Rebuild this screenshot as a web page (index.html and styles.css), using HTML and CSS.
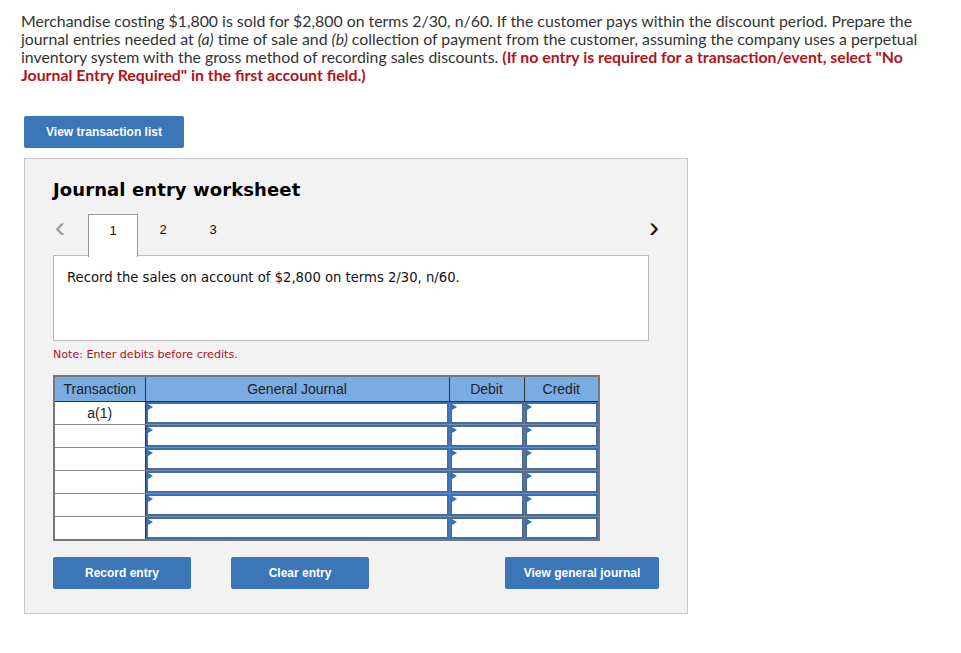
FILE: index.html
```html
<!DOCTYPE html>
<html lang="en">
<head>
    <meta charset="UTF-8">
    <title>Journal Entry Worksheet</title>
    <link rel="stylesheet" href="styles.css">
</head>
<body>
    <p class="question">
        Merchandise costing $1,800 is sold for $2,800 on terms 2/30, n/60. If the customer pays within the discount period. Prepare the<br>
        journal entries needed at <i>(a)</i> time of sale and <i>(b)</i> collection of payment from the customer, assuming the company uses a perpetual<br>
        inventory system with the gross method of recording sales discounts. <strong class="hint">(If no entry is required for a transaction/event, select "No<br>
        Journal Entry Required" in the first account field.)</strong>
    </p>

    <button class="btn btn-list">View transaction list</button>

    <div class="worksheet">
        <h1>Journal entry worksheet</h1>

        <div class="tabs">
            <span class="arrow arrow-left">&#8249;</span>
            <span class="tab active">1</span>
            <span class="tab">2</span>
            <span class="tab">3</span>
            <span class="arrow arrow-right">&#8250;</span>
        </div>

        <div class="description">Record the sales on account of $2,800 on terms 2/30, n/60.</div>

        <p class="note">Note: Enter debits before credits.</p>

        <table class="journal">
            <thead>
                <tr>
                    <th class="col-trans">Transaction</th>
                    <th class="col-account">General Journal</th>
                    <th class="col-amount">Debit</th>
                    <th class="col-amount">Credit</th>
                </tr>
            </thead>
            <tbody>
                <tr>
                    <td class="trans">a(1)</td>
                    <td><div class="field"></div></td>
                    <td><div class="field"></div></td>
                    <td><div class="field"></div></td>
                </tr>
                <tr>
                    <td class="trans"></td>
                    <td><div class="field"></div></td>
                    <td><div class="field"></div></td>
                    <td><div class="field"></div></td>
                </tr>
                <tr>
                    <td class="trans"></td>
                    <td><div class="field"></div></td>
                    <td><div class="field"></div></td>
                    <td><div class="field"></div></td>
                </tr>
                <tr>
                    <td class="trans"></td>
                    <td><div class="field"></div></td>
                    <td><div class="field"></div></td>
                    <td><div class="field"></div></td>
                </tr>
                <tr>
                    <td class="trans"></td>
                    <td><div class="field"></div></td>
                    <td><div class="field"></div></td>
                    <td><div class="field"></div></td>
                </tr>
                <tr>
                    <td class="trans"></td>
                    <td><div class="field"></div></td>
                    <td><div class="field"></div></td>
                    <td><div class="field"></div></td>
                </tr>
            </tbody>
        </table>

        <div class="actions">
            <button class="btn btn-record">Record entry</button>
            <button class="btn btn-clear">Clear entry</button>
            <button class="btn btn-view">View general journal</button>
        </div>
    </div>
</body>
</html>
```

FILE: styles.css
```css
* {
    box-sizing: border-box;
}

body {
    margin: 0;
    padding: 12px 0 0 0;
    background: #fff;
    color: #333;
    font-family: 'Lato', 'Open Sans', sans-serif;
}

.question {
    margin: 0 0 0 21px;
    width: 935px;
    white-space: nowrap;
    font-size: 15.85px;
    line-height: 18px;
    color: #333;
}

.question i {
    font-style: italic;
}

.hint {
    color: #b3121b;
    font-weight: 700;
}

.btn {
    display: block;
    height: 32px;
    border: none;
    border-radius: 2px;
    background-color: #3a76b8;
    color: #fff;
    font-family: 'Liberation Sans', Arial, sans-serif;
    font-weight: bold;
    font-size: 12px;
    cursor: pointer;
}

.btn-list {
    width: 160px;
    margin: 32px 0 0 24px;
}

.worksheet {
    width: 664px;
    height: 456px;
    margin: 10px 0 0 24px;
    padding: 0 0 0 28px;
    background: #f2f2f2;
    border: 1px solid #c8c8c8;
}

h1 {
    margin: 20px 0 0 0;
    font-family: 'DejaVu Sans', Verdana, sans-serif;
    font-size: 18px;
    font-weight: bold;
    color: #000;
    letter-spacing: 0.1px;
}

.tabs {
    display: flex;
    align-items: stretch;
    height: 42px;
    margin-top: 14px;
    width: 606px;
    font-family: 'Liberation Sans', Arial, sans-serif;
    font-size: 13px;
    color: #111;
}

.arrow {
    display: flex;
    align-items: center;
    font-size: 30px;
    line-height: 1;
    padding-bottom: 16px;
}

.arrow-left {
    color: #999;
    width: 35px;
    padding-left: 2px;
}

.arrow-right {
    margin-left: auto;
    color: #111;
}

.tab {
    display: flex;
    align-items: center;
    justify-content: center;
    width: 50px;
    padding-bottom: 12px;
}

.tab.active {
    background: #fff;
    border: 1px solid #999;
    border-bottom: none;
    position: relative;
    z-index: 1;
    height: 43px;
}

.description {
    width: 596px;
    height: 86px;
    margin-top: -1px;
    padding: 14px 13px;
    background: #fff;
    border: 1px solid #bbb;
    font-family: 'DejaVu Sans', Verdana, sans-serif;
    font-size: 13.2px;
    color: #111;
}

.note {
    margin: 7px 0 0 0;
    font-family: 'DejaVu Sans', Verdana, sans-serif;
    font-size: 11.1px;
    color: #a8122a;
}

.journal {
    margin-top: 14px;
    border-collapse: collapse;
    border: 2px solid #777;
    font-family: 'Liberation Sans', Arial, sans-serif;
    font-size: 14px;
    color: #222;
}

.journal th {
    height: 25px;
    padding: 0;
    background: #7aace3;
    font-weight: normal;
    border-right: 1px solid #333;
    border-bottom: 1px solid #333;
}

.journal th:last-child {
    border-right: none;
}

.col-trans {
    width: 91px;
}

.col-account {
    width: 304px;
}

.col-amount {
    width: 75px;
}

.journal td {
    height: 23px;
    padding: 0;
    background: #fff;
    border-bottom: 1px solid #888;
    border-right: 1px solid #777;
}

.journal td:last-child {
    border-right: none;
}

.journal td.trans {
    text-align: center;
    vertical-align: top;
    padding-top: 3px;
    border-right: 1px solid #333;
}

.field {
    position: relative;
    height: 22px;
    border: 2px solid #3b6fb1;
    background: #fff;
}

.field::before {
    content: '';
    position: absolute;
    top: 0;
    left: 0;
    border-top: 3px solid transparent;
    border-bottom: 3px solid transparent;
    border-left: 5px solid #3b6fb1;
}

.actions {
    display: flex;
    width: 606px;
    margin-top: 16px;
}

.btn-record,
.btn-clear {
    width: 138px;
    margin-right: 40px;
}

.btn-view {
    width: 154px;
    margin-left: auto;
    margin-right: 0;
}
```
